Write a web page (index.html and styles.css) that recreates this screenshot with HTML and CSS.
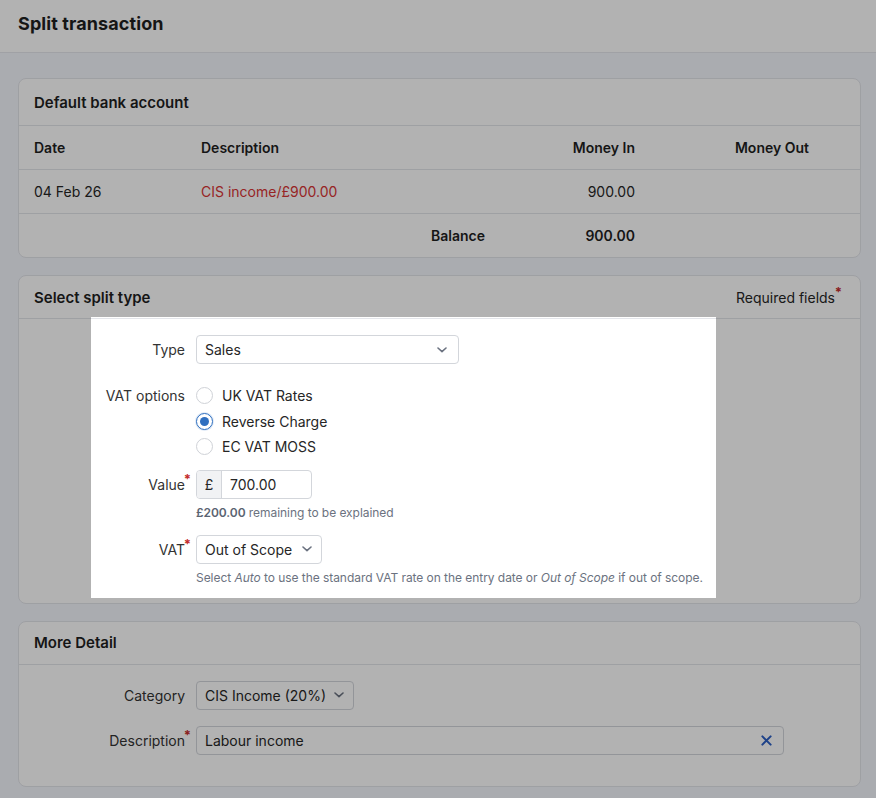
FILE: index.html
```html
<!DOCTYPE html>
<html lang="en">
<head>
<meta charset="utf-8">
<title>Split transaction</title>
<link rel="stylesheet" href="styles.css">
</head>
<body>
<header class="topbar"><h1>Split transaction</h1></header>
<main class="page">
  <section class="card">
    <div class="card-head head-tall"><h2>Default bank account</h2></div>
    <div class="tbl">
      <div class="tr th">
        <div class="td">Date</div>
        <div class="td">Description</div>
        <div class="td num">Money In</div>
        <div class="td num">Money Out</div>
        <div class="td"></div>
      </div>
      <div class="tr">
        <div class="td">04 Feb 26</div>
        <div class="td link">CIS income/£900.00</div>
        <div class="td num">900.00</div>
        <div class="td num"></div>
        <div class="td"></div>
      </div>
      <div class="tr th last">
        <div class="td"></div>
        <div class="td num">Balance</div>
        <div class="td num">900.00</div>
        <div class="td num"></div>
        <div class="td"></div>
      </div>
    </div>
  </section>

  <section class="card">
    <div class="card-head"><h2>Select split type</h2><span class="req-note">Required fields<span class="star">*</span></span></div>
    <div class="card-body body-split">
      <div class="frow">
        <label class="lbl">Type</label>
        <div class="select w-type"><span>Sales</span><svg class="chev" viewBox="0 0 10 6" width="10" height="6"><path d="M1 1l4 3.6L9 1" fill="none" stroke="#6b7280" stroke-width="1.6" stroke-linecap="round" stroke-linejoin="round"/></svg></div>
      </div>
      <div class="frow top gap-radio">
        <label class="lbl lh">VAT options</label>
        <div class="radios">
          <div class="radio"><span class="dot"></span>UK VAT Rates</div>
          <div class="radio"><span class="dot on"></span>Reverse Charge</div>
          <div class="radio"><span class="dot"></span>EC VAT MOSS</div>
        </div>
      </div>
      <div class="frow gap-value">
        <label class="lbl"><span class="rq">Value<span class="ast">*</span></span></label>
        <div class="igroup"><span class="addon">£</span><span class="ival">700.00</span></div>
      </div>
      <div class="frow">
        <span></span>
        <p class="hint"><strong>£200.00</strong> remaining to be explained</p>
      </div>
      <div class="frow gap-vat">
        <label class="lbl"><span class="rq">VAT<span class="ast">*</span></span></label>
        <div class="select w-vat"><span>Out of Scope</span><svg class="chev" viewBox="0 0 10 6" width="10" height="6"><path d="M1 1l4 3.6L9 1" fill="none" stroke="#6b7280" stroke-width="1.6" stroke-linecap="round" stroke-linejoin="round"/></svg></div>
      </div>
      <div class="frow">
        <span></span>
        <p class="hint">Select <em>Auto</em> to use the standard VAT rate on the entry date or <em>Out of Scope</em> if out of scope.</p>
      </div>
    </div>
  </section>

  <section class="card">
    <div class="card-head"><h2>More Detail</h2></div>
    <div class="card-body body-more">
      <div class="frow">
        <label class="lbl">Category</label>
        <div class="select w-cat"><span>CIS Income (20%)</span><svg class="chev" viewBox="0 0 10 6" width="10" height="6"><path d="M1 1l4 3.6L9 1" fill="none" stroke="#6b7280" stroke-width="1.6" stroke-linecap="round" stroke-linejoin="round"/></svg></div>
      </div>
      <div class="frow gap-desc">
        <label class="lbl"><span class="rq">Description<span class="ast">*</span></span></label>
        <div class="input w-desc"><span>Labour income</span><svg class="clear" viewBox="0 0 12 12" width="11" height="11"><path d="M1.5 1.5l9 9M10.5 1.5l-9 9" fill="none" stroke="#2c5fc4" stroke-width="2.2" stroke-linecap="round"/></svg></div>
      </div>
    </div>
  </section>
</main>
<div class="spotlight"></div>
</body>
</html>
```

FILE: styles.css
```css
* { box-sizing: border-box; }

html, body {
  margin: 0;
  padding: 0;
}

body {
  background: #f4f7fd;
  font-family: "Inter", "Noto Sans", sans-serif;
  font-size: 14px;
  color: #262626;
  min-height: 798px;
  overflow: hidden;
}

.topbar {
  height: 53px;
  background: #ffffff;
  border-bottom: 1px solid #e5e7ed;
  display: flex;
  align-items: center;
  padding: 0 0 6px 18px;
}

.topbar h1 {
  margin: 0;
  font-size: 18px;
  font-weight: 700;
  color: #1f1f1f;
  letter-spacing: 0.1px;
}

.page {
  padding: 25px 15px 12px 18px;
  display: flex;
  flex-direction: column;
  gap: 17px;
}

.card {
  background: #ffffff;
  border: 1px solid #e3e5ea;
  border-radius: 8px;
}

.card-head {
  height: 43px;
  border-bottom: 1px solid #e3e5ea;
  display: flex;
  align-items: center;
  justify-content: space-between;
  padding: 0 25px 0 15px;
}

.card-head.head-tall { height: 47px; }

.card-head h2 {
  margin: 0;
  font-size: 15px;
  font-weight: 600;
  color: #1f1f1f;
}

.req-note {
  font-size: 14px;
  color: #262626;
  position: relative;
}

.star, .ast {
  color: #c42b2b;
  font-size: 13px;
  font-weight: 700;
  position: absolute;
  top: -5px;
}

.star { right: -7px; }

.tbl { display: flex; flex-direction: column; }

.tr {
  display: grid;
  grid-template-columns: 167px 315px 150px 174px 1fr;
  height: 44px;
  border-bottom: 1px solid #e3e5ea;
  align-items: center;
}

.tr.last { border-bottom: none; height: 43px; }

.td {
  padding: 0 16px 0 15px;
}

.th .td { font-weight: 600; color: #1f1f1f; }

.td.num { text-align: right; padding: 0 16px 0 0; }

.td.link { color: #d93434; }

.card-body {
  padding: 16px 0 16px 0;
}

.body-split { padding-bottom: 17px; }
.body-more { padding-bottom: 31px; }

.frow {
  display: grid;
  grid-template-columns: 166px 1fr;
  column-gap: 11px;
  align-items: center;
}

.frow.top { align-items: start; }

.gap-radio { margin-top: 19px; }
.gap-value { margin-top: 10px; }
.gap-vat { margin-top: 14px; }
.gap-desc { margin-top: 16px; }

.lbl {
  text-align: right;
  color: #333333;
  font-size: 14px;
}

.lbl.lh { line-height: 25px; }

.rq { position: relative; }
.ast { right: -6px; }

.select, .input, .igroup {
  height: 29px;
  border: 1px solid #d3d6db;
  border-radius: 4px;
  background: #ffffff;
  display: flex;
  align-items: center;
  color: #262626;
}

.select {
  justify-content: space-between;
  padding: 0 11px 0 8px;
}

.input {
  justify-content: space-between;
  padding: 0 11px 0 8px;
}

.w-type { width: 263px; }
.w-vat { width: 126px; padding-right: 9px; }
.w-cat { width: 158px; padding-right: 9px; }
.w-desc { width: 588px; }

.chev { display: block; flex: none; }
.clear { display: block; flex: none; }

.radios { display: flex; flex-direction: column; }

.radio {
  height: 25.5px;
  display: flex;
  align-items: center;
  gap: 9px;
  color: #262626;
}

.dot {
  width: 17px;
  height: 17px;
  border-radius: 50%;
  border: 1px solid #cfd2d7;
  background: #ffffff;
  flex: none;
  position: relative;
}

.dot.on {
  border: 1.5px solid #2f6fc0;
  box-shadow: 0 0 0 1px rgba(47, 111, 192, 0.15);
}

.dot.on::after {
  content: "";
  position: absolute;
  left: 50%;
  top: 50%;
  width: 9px;
  height: 9px;
  margin: -4.5px 0 0 -4.5px;
  border-radius: 50%;
  background: #2f6fc0;
}

.igroup {
  width: 116px;
  overflow: hidden;
}

.addon {
  width: 25px;
  height: 100%;
  background: #f1f2f4;
  border-right: 1px solid #d3d6db;
  display: flex;
  align-items: center;
  justify-content: center;
  color: #262626;
}

.ival { padding-left: 8px; }

.hint {
  margin: 6px 0 0 0;
  font-size: 12px;
  line-height: 16px;
  color: #6b7280;
  letter-spacing: -0.05px;
}

.hint strong { font-weight: 600; color: #5b6472; }

.spotlight {
  position: absolute;
  left: 91px;
  top: 317px;
  width: 625px;
  height: 281px;
  box-shadow: 0 0 0 3000px rgba(0, 0, 0, 0.3);
  pointer-events: none;
}
```
